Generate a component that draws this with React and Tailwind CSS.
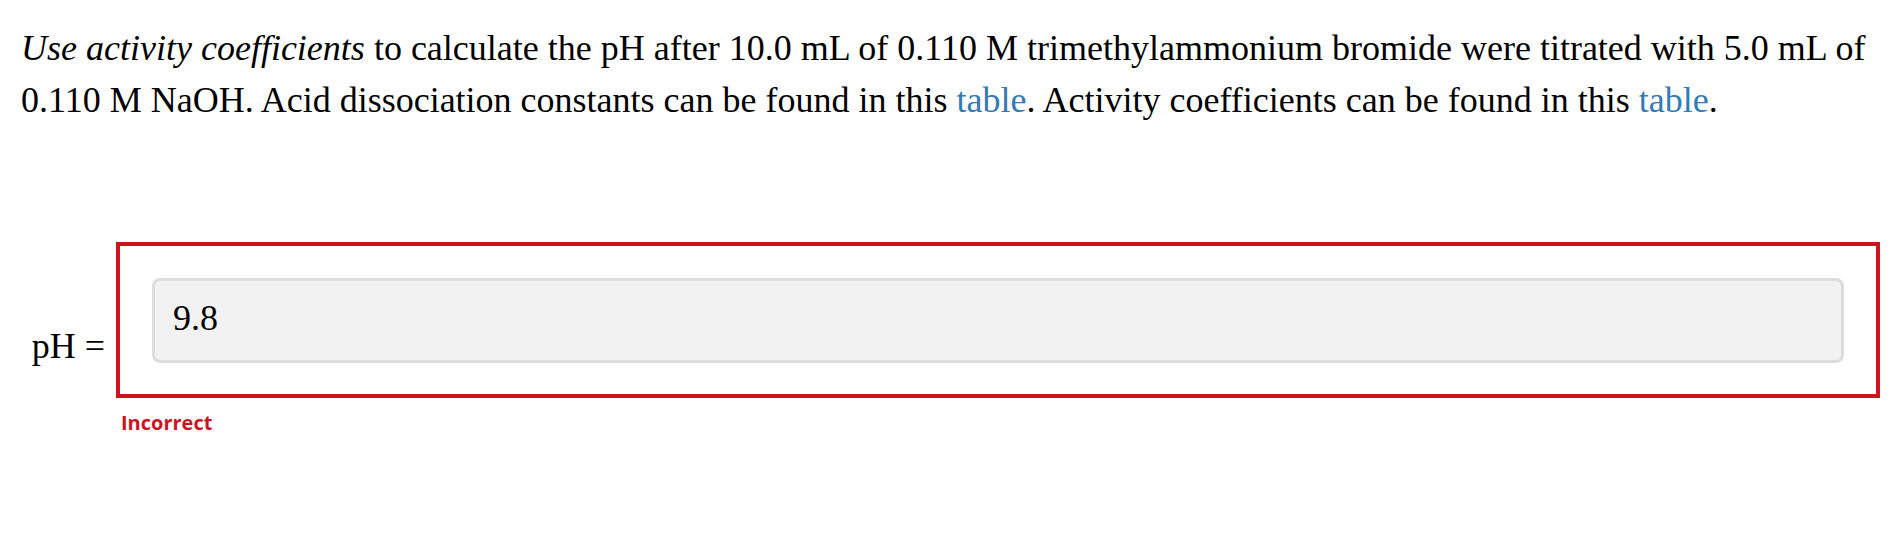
export default function App() {
  return (
    <div className="bg-white min-h-[548px] pl-[21px] pr-[22px] pt-[22px] font-['Liberation_Serif',serif] text-black">
      <p className="text-[36px] leading-[52px]">
        <em>Use activity coefficients</em> to calculate the pH after 10.0 mL of 0.110 M
        trimethylammonium bromide were titrated with 5.0 mL of 0.110 M NaOH. Acid dissociation
        constants can be found in this <a className="text-[#337ab7]">table</a>. Activity
        coefficients can be found in this <a className="text-[#337ab7]">table</a>.
      </p>

      <div className="mt-[116px] flex">
        <div className="w-[95px] flex-shrink-0 flex justify-end pr-[11px]">
          <span className="mt-[78px] text-[36px] leading-[52px] whitespace-nowrap">pH =</span>
        </div>
        <div className="flex-1">
          <div className="border-4 border-[#d0121f] pt-[32px] pb-[31px] px-[32px]">
            <input
              readOnly
              value="9.8"
              className="w-full h-[85px] rounded-[8px] border-[3px] border-[#dddddd] bg-[#f2f2f2] pl-[18px] pb-[6px] text-[36px] font-['Liberation_Serif',serif] outline-none"
            />
          </div>
          <div className="mt-[10px] ml-[5px] font-['Open_Sans',sans-serif] font-bold text-[20px] leading-[30px] text-[#d0121f]">
            Incorrect
          </div>
        </div>
      </div>
    </div>
  );
}
